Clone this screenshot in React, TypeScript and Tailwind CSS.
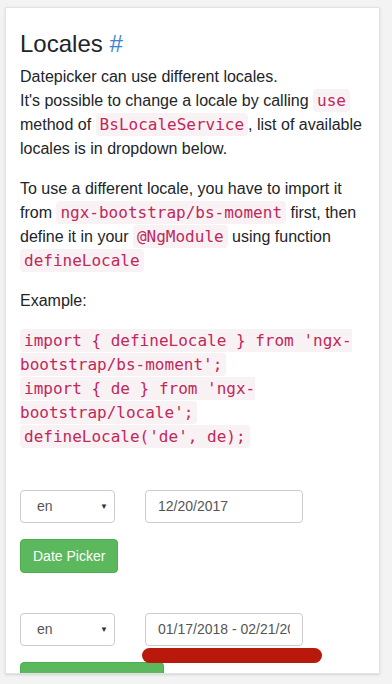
import React from "react";

function Code({ children }: { children: React.ReactNode }) {
    return (
        <code className="rounded-[4px] bg-[#f9f2f4] px-1 py-[2px] font-['DejaVu_Sans_Mono',monospace] text-[16px] text-[#c0285a] box-decoration-slice">
            {children}
        </code>
    );
}

function LocaleSelect() {
    return (
        <div className="flex h-[33px] w-[95px] items-center justify-between rounded-[4px] border border-[#cccccc] bg-white pl-[16px] pr-[6px] text-[14px] text-[#555555]">
            <span>en</span>
            <span className="text-[8px] text-[#333333]">▼</span>
        </div>
    );
}

function DateInput({ value }: { value: string }) {
    return (
        <div className="ml-[30px] flex h-[33px] w-[158px] items-center rounded-[4px] border border-[#cccccc] bg-white px-[12px] text-[14px] text-[#555555]">
            <div className="overflow-hidden whitespace-nowrap">{value}</div>
        </div>
    );
}

function GreenButton({ label }: { label: string }) {
    return (
        <div className="inline-flex h-[34px] items-center rounded-[4px] border border-[#4cae4c] bg-[#5cb85c] px-[12px] text-[14px] text-white">
            {label}
        </div>
    );
}

export default function App() {
    return (
        <div className="relative h-[684px] w-[392px] overflow-hidden bg-[#f3f3f3] pt-[7px] font-['Liberation_Sans',Arial,sans-serif] text-[#212529]">
            {/* Docs card */}
            <div className="ml-[5px] h-[667px] w-[375px] overflow-hidden border border-[#e4e4e4] bg-white pl-[14px] pr-[14px] pt-[23px] shadow-sm">
                <h3 className="mb-[8px] text-[24px] leading-[1.1]">
                    Locales <span className="text-[#3a86d6]">#</span>
                </h3>
                <p className="mb-4 text-[16px] leading-[24px]">
                    Datepicker can use different locales.
                    <br />
                    It's possible to change a locale by calling <Code>use</Code> method of{" "}
                    <Code>BsLocaleService</Code>, list of available locales is in dropdown below.
                </p>
                <p className="mb-4 text-[16px] leading-[24px]">
                    To use a different locale, you have to import it from <Code>ngx-bootstrap/bs-moment</Code> first, then
                    define it in your <Code>@NgModule</Code> using function <Code>defineLocale</Code>
                </p>
                <p className="mb-4 text-[16px] leading-[24px]">Example:</p>
                <pre className="mb-4 whitespace-pre-wrap font-['DejaVu_Sans_Mono',monospace] text-[16px] leading-[24px]">
                    <Code>import {"{"} defineLocale {"}"} from 'ngx-bootstrap/bs-moment';</Code>
                    {"\n"}
                    <Code>import {"{"} de {"}"} from 'ngx-bootstrap/locale';</Code>
                    {"\n"}
                    <Code>defineLocale('de', de);</Code>
                </pre>

                {/* Demo controls */}
                <div className="pt-[25px]">
                    <div className="flex">
                        <LocaleSelect />
                        <DateInput value="12/20/2017" />
                    </div>
                    <div className="mt-4">
                        <GreenButton label="Date Picker" />
                    </div>
                    <div className="mt-[40px] flex">
                        <LocaleSelect />
                        <DateInput value="01/17/2018 - 02/21/2018" />
                    </div>
                    <div className="mt-4">
                        <GreenButton label="Date Range Picker" />
                    </div>
                </div>
            </div>
            {/* hand-drawn marker underline */}
            <div className="absolute left-[142px] top-[648px] h-[15px] w-[180px] rounded-full bg-[#b8190a]" />
        </div>
    );
}
